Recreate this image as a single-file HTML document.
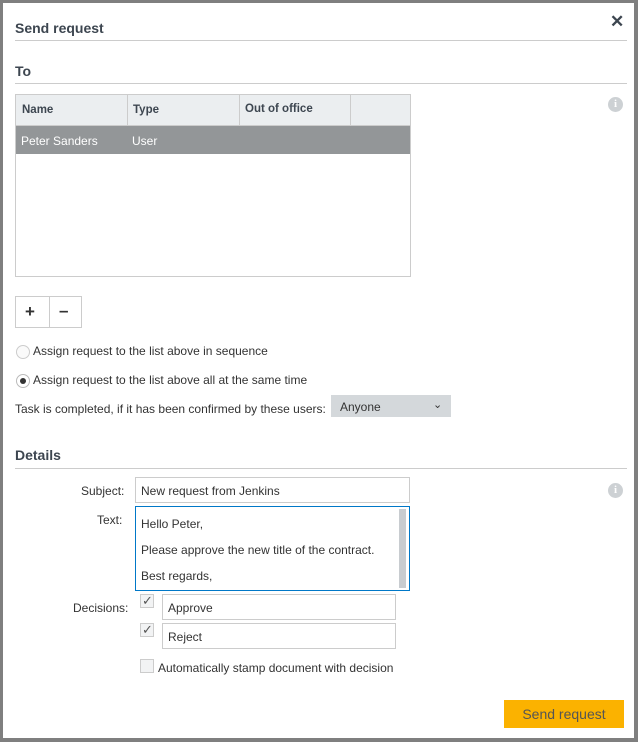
<!DOCTYPE html>
<html><head><meta charset="utf-8"><style>
*{box-sizing:border-box;margin:0;padding:0}
html,body{width:638px;height:742px;overflow:hidden;background:#7f7f7f}
body{font-family:"Liberation Sans",sans-serif;font-size:12px;color:#333}
#d{position:absolute;left:3px;top:3px;width:631px;height:735px;background:#fff}
.a{position:absolute;white-space:nowrap}
.h{font-weight:bold;color:#3d4650;font-size:14px}
.line{position:absolute;left:12px;width:612px;height:1px;background:#ccc}
.info{position:absolute;width:15px;height:15px;border-radius:50%;background:#cdd1d4;color:#fff;font-weight:bold;font-size:11px;text-align:center;line-height:15px;font-family:"Liberation Serif",serif}
.inp{position:absolute;border:1px solid #ccc;background:#fff;padding-left:5px}
.cb{position:absolute;width:14px;height:14px;border:1px solid #ccc;background:#f2f3f4}
</style></head><body><div id="d">
<div class="a h" style="left:12px;top:17px;font-size:14px">Send request</div>
<div class="a" style="left:607px;top:9px;font-size:17px;font-weight:bold;color:#3d4650">✕</div>
<div class="line" style="top:37px"></div>
<div class="a h" style="left:12px;top:60px">To</div>
<div class="line" style="top:80px"></div>
<div class="info" style="left:605px;top:94px">i</div>

<div style="position:absolute;left:12px;top:91px;width:396px;height:183px;border:1px solid #ccc">
 <div style="height:31px;background:#ebeef0;border-bottom:1px solid #ccc;position:relative;font-weight:bold;color:#3d4650;font-size:11.5px">
  <span class="a" style="left:6px;top:9px">Name</span>
  <span class="a" style="left:117px;top:9px">Type</span>
  <span class="a" style="left:229px;top:8px">Out of office</span>
  <div style="position:absolute;left:111px;top:0;width:1px;height:31px;background:#ccc"></div>
  <div style="position:absolute;left:223px;top:0;width:1px;height:31px;background:#ccc"></div>
  <div style="position:absolute;left:334px;top:0;width:1px;height:31px;background:#ccc"></div>
 </div>
 <div style="height:28px;background:#939698;color:#fff;position:relative">
  <span class="a" style="left:5px;top:8px">Peter Sanders</span>
  <span class="a" style="left:116px;top:8px">User</span>
 </div>
</div>

<div style="position:absolute;left:12px;top:293px;width:67px;height:32px;border:1px solid #ccc">
 <div style="position:absolute;left:33px;top:0;width:1px;height:30px;background:#ccc"></div>
 <span class="a" style="left:9px;top:5px;font-size:17px;font-weight:bold;color:#333">+</span>
 <span class="a" style="left:43px;top:4px;font-size:17px;font-weight:bold;color:#333">–</span>
</div>

<div style="position:absolute;left:13px;top:342px;width:14px;height:14px;border-radius:50%;border:1px solid #ccc;background:#fafafa"></div>
<div class="a" style="left:30px;top:341px">Assign request to the list above in sequence</div>
<div style="position:absolute;left:13px;top:371px;width:14px;height:14px;border-radius:50%;border:1px solid #bbb;background:#fff"><div style="position:absolute;left:3px;top:3px;width:6px;height:6px;border-radius:50%;background:#333"></div></div>
<div class="a" style="left:30px;top:370px">Assign request to the list above all at the same time</div>
<div class="a" style="left:12px;top:399px">Task is completed, if it has been confirmed by these users:</div>
<div style="position:absolute;left:328px;top:392px;width:120px;height:22px;background:#d4d8db"><span class="a" style="left:9px;top:5px">Anyone</span><span class="a" style="left:102px;top:3px;font-size:11px">⌄</span></div>

<div class="a h" style="left:12px;top:444px">Details</div>
<div class="line" style="top:465px"></div>
<div class="info" style="left:605px;top:480px">i</div>

<div class="a" style="left:78px;top:481px">Subject:</div>
<div class="inp" style="left:132px;top:474px;width:275px;height:26px"><span class="a" style="left:5px;top:6px">New request from Jenkins</span></div>
<div class="a" style="left:94px;top:510px">Text:</div>
<div style="position:absolute;left:132px;top:503px;width:275px;height:85px;border:1px solid #0078c8">
 <div style="position:absolute;right:3px;top:2px;width:7px;height:79px;background:#c8ccd0"></div>
 <span class="a" style="left:5px;top:10px">Hello Peter,</span>
 <span class="a" style="left:5px;top:36px">Please approve the new title of the contract.</span>
 <span class="a" style="left:5px;top:62px">Best regards,</span>
</div>
<div class="a" style="left:70px;top:598px">Decisions:</div>
<div class="cb" style="left:137px;top:591px"><span class="a" style="left:1px;top:-2px;font-size:13px;color:#555">✓</span></div>
<div class="inp" style="left:159px;top:591px;width:234px;height:26px"><span class="a" style="left:5px;top:6px">Approve</span></div>
<div class="cb" style="left:137px;top:620px"><span class="a" style="left:1px;top:-2px;font-size:13px;color:#555">✓</span></div>
<div class="inp" style="left:159px;top:620px;width:234px;height:26px"><span class="a" style="left:5px;top:6px">Reject</span></div>
<div class="cb" style="left:137px;top:656px"></div>
<div class="a" style="left:155px;top:658px">Automatically stamp document with decision</div>

<div style="position:absolute;left:501px;top:697px;width:120px;height:28px;background:#fbb200;color:#555;font-size:14px;text-align:center;line-height:28px">Send request</div>
</div></body></html>
